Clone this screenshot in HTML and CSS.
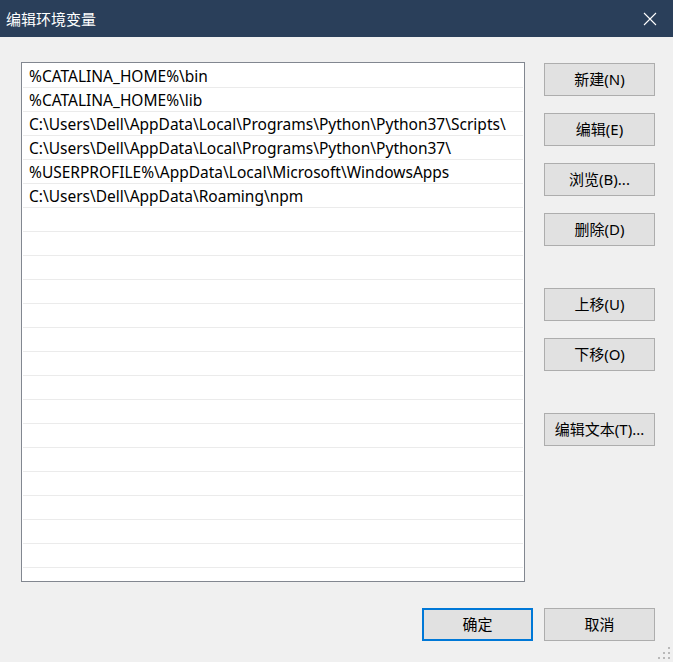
FILE: index.html
```html
<!DOCTYPE html>
<html lang="zh-CN">
<head>
<meta charset="utf-8">
<title>编辑环境变量</title>
<link rel="stylesheet" href="styles.css">
</head>
<body>
<div class="window">
  <div class="titlebar">
    <span class="title">编辑环境变量</span>
    <span class="close">
      <svg width="14" height="14" viewBox="0 0 14 14"><path d="M1 1 L13 13 M13 1 L1 13" stroke="#ffffff" stroke-width="1.1" fill="none"/></svg>
    </span>
  </div>
  <div class="content">
    <div class="main">
      <div class="list">
        <div class="row">%CATALINA_HOME%\bin</div>
        <div class="row">%CATALINA_HOME%\lib</div>
        <div class="row">C:\Users\Dell\AppData\Local\Programs\Python\Python37\Scripts\</div>
        <div class="row">C:\Users\Dell\AppData\Local\Programs\Python\Python37\</div>
        <div class="row">%USERPROFILE%\AppData\Local\Microsoft\WindowsApps</div>
        <div class="row">C:\Users\Dell\AppData\Roaming\npm</div>
        <div class="row"></div><div class="row"></div><div class="row"></div><div class="row"></div>
        <div class="row"></div><div class="row"></div><div class="row"></div><div class="row"></div>
        <div class="row"></div><div class="row"></div><div class="row"></div><div class="row"></div>
        <div class="row"></div><div class="row"></div><div class="row"></div><div class="row"></div>
      </div>
      <div class="side">
        <div class="group">
          <button class="btn">新建(N)</button>
          <button class="btn">编辑(E)</button>
          <button class="btn">浏览(B)...</button>
          <button class="btn">删除(D)</button>
        </div>
        <div class="group">
          <button class="btn">上移(U)</button>
          <button class="btn">下移(O)</button>
        </div>
        <div class="group">
          <button class="btn">编辑文本(T)...</button>
        </div>
      </div>
    </div>
    <div class="footer">
      <button class="btn primary">确定</button>
      <button class="btn">取消</button>
    </div>
  </div>
  <div class="grip">
    <i class="g1"></i><i class="g2"></i><i class="g3"></i><i class="g4"></i><i class="g5"></i><i class="g6"></i>
  </div>
</div>
</body>
</html>
```
FILE: styles.css
```css
html, body {
  margin: 0;
  padding: 0;
  background: #f0f0f0;
}
body {
  font-family: "Noto Sans", "Noto Sans CJK SC", sans-serif;
  font-size: 15px;
  color: #000;
}
.window {
  position: relative;
  width: 673px;
  height: 662px;
  overflow: hidden;
  background: #f0f0f0;
}
.titlebar {
  height: 37px;
  background: #2a3f5a;
  display: flex;
  align-items: center;
  justify-content: space-between;
}
.title {
  color: #ffffff;
  font-family: "Noto Sans CJK SC", sans-serif;
  font-size: 15px;
  padding-left: 6px;
  line-height: 37px;
}
.close {
  width: 46px;
  height: 37px;
  display: flex;
  align-items: center;
  justify-content: center;
}
.content {
  padding: 25px 18px 0 21px;
}
.main {
  display: flex;
  gap: 19px;
}
.list {
  width: 502px;
  height: 517px;
  padding-top: 1px;
  border: 1px solid #828790;
  background: #ffffff;
  overflow: hidden;
}
.row {
  height: 23px;
  border-bottom: 1px solid #ebebeb;
  margin: 0 1px;
  padding-left: 6px;
  line-height: 25px;
  font-size: 15.5px;
  white-space: nowrap;
}
.side {
  display: flex;
  flex-direction: column;
  gap: 42px;
  padding-top: 1px;
}
.group {
  display: flex;
  flex-direction: column;
  gap: 17px;
}
.btn {
  width: 111px;
  height: 33px;
  box-sizing: border-box;
  background: #e1e1e1;
  border: 1px solid #adadad;
  font-family: "Noto Sans", "Noto Sans CJK SC", sans-serif;
  font-size: 15px;
  line-height: 29px;
  color: #000;
  padding: 0 0 1px 0;
  margin: 0;
}
.btn.primary {
  border: 2px solid #0078d7;
}
.footer {
  display: flex;
  justify-content: flex-end;
  gap: 11px;
  margin-top: 26px;
}
.grip {
  position: absolute;
  right: 2px;
  bottom: 2px;
  width: 13px;
  height: 13px;
}
.grip i {
  position: absolute;
  width: 2px;
  height: 2px;
  background: #b9b9b9;
}
.grip .g1 { left: 10px; top: 0; }
.grip .g2 { left: 5px; top: 5px; }
.grip .g3 { left: 10px; top: 5px; }
.grip .g4 { left: 0; top: 10px; }
.grip .g5 { left: 5px; top: 10px; }
.grip .g6 { left: 10px; top: 10px; }
```
